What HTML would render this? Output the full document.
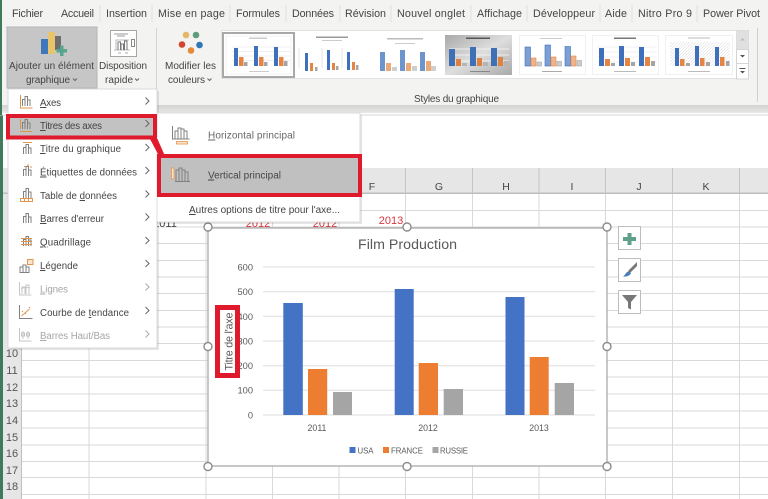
<!DOCTYPE html>
<html lang="fr">
<head>
<meta charset="utf-8">
<title>Film Production</title>
<style>
html,body{margin:0;padding:0;background:#fff;width:768px;height:499px;overflow:hidden}
svg{display:block;font-family:"Liberation Sans",sans-serif;filter:blur(.35px)}
.t{font-size:10.7px;fill:#444}
.r{font-size:10px;fill:#444}
.m{font-size:9.7px;fill:#444}
.d{font-size:9.7px;fill:#a6a6a6}
.s{font-size:10px;fill:#444}
.u{text-decoration:underline}
.ax{font-size:9.3px;fill:#595959}
.yr{font-size:8.8px;fill:#595959}
.h{font-size:10.5px;fill:#444;text-anchor:middle}
.g{stroke:#d9d9d9;stroke-width:1}
.c{fill:#fff;stroke:#8c8c8c;stroke-width:1.4}
.chev{fill:none;stroke:#666;stroke-width:1}
.chevd{fill:none;stroke:#aaa;stroke-width:1}
.ib{fill:none;stroke:#808080;stroke-width:1}
.io{fill:none;stroke:#e0954a;stroke-width:1}
</style>
</head>
<body>
<svg width="768" height="499" viewBox="0 0 768 499" xmlns="http://www.w3.org/2000/svg">
<defs>
<linearGradient id="gt" x1="0" y1="0" x2="1" y2="1"><stop offset="0" stop-color="#a9a9a9"/><stop offset=".5" stop-color="#dedede"/><stop offset="1" stop-color="#a9a9a9"/></linearGradient>
<linearGradient id="sh" x1="0" y1="0" x2="0" y2="1"><stop offset="0" stop-color="#d2d2d0"/><stop offset="1" stop-color="#e8e8e6"/></linearGradient>
<pattern id="ht" width="3" height="3" patternUnits="userSpaceOnUse"><path d="M0 3L3 0" stroke="#ddd" stroke-width=".6"/></pattern>
<g id="mi"><path class="ib" d="M3.5 11V4.500h2.500V11M6 11V1.500h2.500V11M8.500 11V5h2.500v6"/></g>
</defs>

<!-- sheet -->
<rect width="768" height="499" fill="#fff"/>
<rect x="0" y="168" width="768" height="26" fill="#e6e6e6"/>
<rect x="0" y="192.500" width="768" height="1.500" fill="#bdbdbd"/>
<rect x="3" y="194" width="19" height="305" fill="#e6e6e6"/>
<rect x="21" y="194" width="1" height="305" fill="#c0c0c0"/>
<g class="g">
<path d="M22 210.500H768M22 227H768M22 243.500H768M22 260.500H768M22 277H768M22 293.500H768M22 310.500H768M22 327H768M22 343.500H768M22 360.500H768M22 377H768M22 394H768M22 411H768M22 428H768M22 445H768M22 461.500H768M22 477.500H768M22 494.500H768"/>
<path d="M89 194V499M206 194V499M272.500 194V499M339 194V499M405.500 194V499M472.500 194V499M539 194V499M605.500 194V499M672.500 194V499M739.500 194V499"/>
</g>
<path d="M339 168V193M405.500 168V193M472.500 168V193M539 168V193M605.500 168V193M672.500 168V193M739.500 168V193" stroke="#c4c4c4"/>
<text x="372" y="190" class="h">F</text><text x="439" y="190" class="h">G</text><text x="506" y="190" class="h">H</text><text x="572" y="190" class="h">I</text><text x="639" y="190" class="h">J</text><text x="706" y="190" class="h">K</text>
<g font-size="11" fill="#555" text-anchor="middle">
<text x="12" y="357">10</text><text x="12" y="374">11</text><text x="12" y="391">12</text><text x="12" y="407">13</text><text x="12" y="424">14</text><text x="12" y="441">15</text><text x="12" y="457">16</text><text x="12" y="474">17</text><text x="12" y="490">18</text>
</g>
<rect x="0" y="115" width="3" height="384" fill="#3f7a5a"/>
<g font-size="11" fill="#d8343f" text-anchor="middle"><text x="391" y="224">2013</text><text x="258" y="227">2012</text><text x="325" y="227">2012</text></g>
<text x="165" y="227" font-size="11" fill="#444" text-anchor="middle">2011</text>

<!-- ribbon -->
<rect width="768" height="105" fill="#f3f3f2"/>
<rect y="105" width="768" height="8" fill="url(#sh)"/>
<rect y="113" width="768" height="1" fill="#fff"/>
<rect y="114.500" width="768" height="1" fill="#d6d6d6"/>
<rect width="2" height="115" fill="#3f7a5a"/>
<g class="t">
<text x="12" y="17" textLength="31">Fichier</text><text x="61" y="17" textLength="33">Accueil</text><text x="106" y="17" textLength="41">Insertion</text><text x="158" y="17" textLength="67">Mise en page</text><text x="236" y="17" textLength="44">Formules</text><text x="292" y="17" textLength="42">Données</text><text x="345" y="17" textLength="41">Révision</text><text x="397" y="17" textLength="68">Nouvel onglet</text><text x="477" y="17" textLength="45">Affichage</text><text x="533" y="17" textLength="62">Développeur</text><text x="605" y="17" textLength="22">Aide</text><text x="638" y="17" textLength="54">Nitro Pro 9</text><text x="703" y="17" textLength="57">Power Pivot</text>
</g>
<path d="M100 5V22M152 5V22M230 5V22M286 5V22M340 5V22M391 5V22M471 5V22M527 5V22M600 5V22M632 5V22M697 5V22" stroke="#e0e0e0"/>

<!-- Ajouter -->
<rect x="7" y="27" width="90" height="61" fill="#c6c6c6" stroke="#b5b5b5"/>
<rect x="41" y="39" width="7" height="15" fill="#3f77bd"/>
<rect x="48" y="32" width="7" height="22" fill="#e8c46c"/>
<rect x="55" y="36" width="6" height="14" fill="#6e6e6e"/>
<path d="M60 45.500h3.500V49H67v3.500h-3.500V56H60v-3.500h-3.500V49H60z" fill="#55a68c"/>
<g class="r">
<text x="9" y="69" textLength="85">Ajouter un élément</text><text x="26" y="83" textLength="44">graphique</text>
<text x="99" y="69" textLength="48">Disposition</text><text x="105" y="83" textLength="28">rapide</text>
<text x="165" y="69" textLength="51">Modifier les</text><text x="168" y="83" textLength="37">couleurs</text>
</g>
<path class="chev" d="M73 78.500l2 2 2-2M135 78.500l2 2 2-2M207.500 78.500l2 2 2-2"/>
<!-- Disposition -->
<rect x="110.500" y="30.500" width="26" height="26" fill="#fff" stroke="#a6a6a6"/>
<path d="M114 34h14M117 36h8" stroke="#999"/>
<path d="M116 50V40h13M114 50h16" fill="none" stroke="#bbb"/>
<path d="M118 50v-8h2.500v8M121 50v-6h2.500v6M124.500 50v-9h2.500v9" fill="none" stroke="#777"/>
<rect x="131.500" y="39.500" width="3" height="7" fill="none" stroke="#888"/>
<path d="M118 53h3M125 53h3" stroke="#aaa"/>
<path d="M156.500 28V90" stroke="#d4d4d4"/>
<!-- colours -->
<circle cx="186" cy="35" r="3.300" fill="#e6b765"/><circle cx="196" cy="35" r="3.300" fill="#5f9c7c"/>
<circle cx="182" cy="44.500" r="3.300" fill="#d2452f"/><circle cx="199.500" cy="45" r="3.300" fill="#2f78b5"/>
<circle cx="191" cy="50.500" r="3.300" fill="#e58a35"/>

<!-- gallery -->
<rect x="221.500" y="30.500" width="526" height="48" fill="#fff" stroke="#e2e2e2"/>
<rect x="223" y="33" width="71" height="44" fill="#fff" stroke="#a8a8a8" stroke-width="2"/>
<!-- T1 -->
<g>
<rect x="226" y="36" width="65" height="38" fill="#fff" stroke="#f0f0f0"/>
<path d="M232 47h58M232 51.500h58M232 56h58M232 60.500h58" stroke="#efefef"/>
<rect x="249" y="37.500" width="18" height="1.500" fill="#ccc"/>
<rect x="234" y="48" width="4" height="18" fill="#3e70bb"/><rect x="239" y="57" width="4.500" height="9" fill="#e58544"/><rect x="244" y="62" width="3.500" height="4" fill="#a5a5a5"/>
<rect x="254" y="46" width="4" height="20" fill="#3e70bb"/><rect x="259" y="57" width="4.500" height="9" fill="#e58544"/><rect x="264" y="62" width="3.500" height="4" fill="#a5a5a5"/>
<rect x="274" y="47" width="4" height="19" fill="#3e70bb"/><rect x="279" y="57" width="4.500" height="9" fill="#e58544"/><rect x="284" y="61" width="3.500" height="5" fill="#a5a5a5"/>
<rect x="249" y="71" width="20" height="1" fill="#ccc"/>
</g>
<!-- T2 -->
<g>
<rect x="316" y="36.500" width="32" height="1.500" fill="#999"/><rect x="322" y="40" width="20" height="1" fill="#ccc"/>
<path d="M299 48V68M322 48V68M342 48V68" stroke="#e4e4e4"/>
<rect x="305" y="53" width="3" height="18" fill="#3e70bb"/><rect x="310" y="63" width="3" height="8" fill="#e58544"/><rect x="315" y="67" width="2.500" height="4" fill="#a5a5a5"/>
<rect x="327" y="50" width="3" height="20" fill="#3e70bb"/><rect x="332" y="63" width="3" height="7" fill="#e58544"/><rect x="336" y="66" width="2.500" height="4" fill="#a5a5a5"/>
<rect x="347" y="52" width="3" height="18" fill="#3e70bb"/><rect x="352" y="62" width="3" height="8" fill="#e58544"/><rect x="356" y="65" width="2.500" height="5" fill="#a5a5a5"/>
</g>
<!-- T3 -->
<g>
<rect x="387" y="38" width="36" height="1.500" fill="#bbb"/><rect x="395" y="43" width="20" height="1" fill="#ccc"/>
<rect x="380" y="52" width="5" height="19" fill="#6d95cc"/><rect x="386" y="63" width="5" height="8" fill="#eda877"/><rect x="392" y="67" width="5" height="4" fill="#cfcfcf"/>
<rect x="400" y="50" width="5" height="21" fill="#6d95cc"/><rect x="406" y="63" width="5" height="8" fill="#eda877"/><rect x="412" y="66" width="5" height="5" fill="#cfcfcf"/>
<rect x="420" y="52" width="5" height="19" fill="#6d95cc"/><rect x="426" y="61" width="5" height="10" fill="#eda877"/><rect x="431" y="66" width="5" height="5" fill="#cfcfcf"/>
</g>
<!-- T4 -->
<rect x="445" y="35" width="67" height="40" fill="url(#gt)"/>
<rect x="466" y="37.500" width="24" height="1.500" fill="#555"/>
<path d="M449 49h60M449 55h60M449 61h60" stroke="#efefef"/>
<g fill="#3f6fb5"><rect x="449" y="49" width="6" height="17"/><rect x="470" y="47" width="6" height="19"/><rect x="491" y="48" width="6" height="18"/></g>
<g fill="#e0823f"><rect x="456" y="59" width="5" height="7"/><rect x="477" y="58" width="5" height="8"/><rect x="498" y="57" width="5" height="9"/></g>
<g fill="#b5b5b5"><rect x="462" y="63" width="5" height="3"/><rect x="483" y="62" width="5" height="4"/><rect x="504" y="61" width="5" height="5"/></g>
<rect x="470" y="71" width="20" height="1" fill="#888"/>
<!-- T5 -->
<rect x="519.500" y="35.500" width="66" height="39" fill="#fff" stroke="#f0f0f0"/>
<rect x="540" y="38" width="22" height="1" fill="#ccc"/>
<g fill="#7c9fd4" stroke="#3e70bb" stroke-width=".6"><rect x="525" y="47" width="5.500" height="19"/><rect x="545" y="45" width="5.500" height="21"/><rect x="565" y="46.500" width="5.500" height="19.500"/></g>
<g fill="#f0b48c" stroke="#e58544" stroke-width=".6"><rect x="531" y="58" width="5" height="8"/><rect x="551" y="57" width="5" height="9"/><rect x="571" y="56" width="5" height="10"/></g>
<g fill="#cdcdcd" stroke="#a5a5a5" stroke-width=".6"><rect x="537" y="62" width="4.500" height="4"/><rect x="557" y="61.500" width="4.500" height="4.500"/><rect x="577" y="60.500" width="4.500" height="5.500"/></g>
<rect x="542" y="71" width="20" height="1" fill="#aaa"/>
<!-- T6 -->
<rect x="592.500" y="35.500" width="66" height="39" fill="#fff" stroke="#f0f0f0"/>
<rect x="614" y="37.500" width="22" height="1.500" fill="#777"/>
<path d="M597 47h60M597 52h60M597 57h60M597 62h60" stroke="#f0f0f0"/>
<g fill="#3e70bb"><rect x="599" y="48" width="5" height="18"/><rect x="619" y="46" width="5" height="20"/><rect x="639" y="47" width="5" height="19"/></g>
<g fill="#e58544"><rect x="605" y="59" width="5" height="7"/><rect x="625" y="58" width="5" height="8"/><rect x="645" y="57" width="5" height="9"/></g>
<g fill="#a5a5a5"><rect x="611" y="63" width="4" height="3"/><rect x="631" y="62" width="4" height="4"/><rect x="651" y="61" width="4" height="5"/></g>
<rect x="614" y="71" width="22" height="1" fill="#bbb"/>
<!-- T7 -->
<rect x="665.500" y="35.500" width="67" height="39" fill="#fff" stroke="#f0f0f0"/>
<rect x="670" y="42" width="60" height="24" fill="url(#ht)"/>
<rect x="688" y="37.500" width="22" height="1" fill="#bbb"/>
<g fill="#3e70bb"><rect x="675" y="48" width="4" height="18"/><rect x="695" y="46" width="4" height="20"/><rect x="715" y="47" width="4" height="19"/></g>
<g fill="#e58544"><rect x="680" y="59" width="4.500" height="7"/><rect x="700" y="58" width="4.500" height="8"/><rect x="720" y="57" width="4.500" height="9"/></g>
<g fill="#a5a5a5"><rect x="686" y="63" width="4" height="3"/><rect x="706" y="62" width="4" height="4"/><rect x="726" y="61" width="3.500" height="5"/></g>
<rect x="688" y="71" width="22" height="1" fill="#bbb"/>
<!-- scroll -->
<rect x="736.500" y="30.500" width="12" height="19" fill="#e0e0e0" stroke="#dcdcdc"/>
<rect x="736.500" y="49.500" width="12" height="14" fill="#fff" stroke="#d4d4d4"/>
<rect x="736.500" y="63.500" width="12" height="15.500" fill="#fff" stroke="#d4d4d4"/>
<path d="M740 40.500h5l-2.500-2.500z" fill="#bbb"/>
<path d="M740 55h5l-2.500 2.500z" fill="#555"/>
<path d="M739.500 68.500h6" stroke="#555"/><path d="M740 71h5l-2.500 2.500z" fill="#555"/>
<text x="414" y="102" class="r" textLength="85">Styles du graphique</text>
<path d="M757.500 28V102" stroke="#cfcfcf"/>

<!-- chart -->
<rect x="208" y="228" width="399" height="238" fill="#fff" stroke="#a3a3a3" stroke-width="1.200"/>
<text x="358" y="249" font-size="14.200" fill="#595959" textLength="99">Film Production</text>
<path d="M263 267H595M263 291.700H595M263 316.300H595M263 341H595M263 365.700H595M263 390.300H595M263 415H595" stroke="#dedede"/>
<g class="ax" text-anchor="end"><text x="253" y="270.500">600</text><text x="253" y="295">500</text><text x="253" y="320">400</text><text x="253" y="344.500">300</text><text x="253" y="369">200</text><text x="253" y="393.500">100</text><text x="253" y="418.500">0</text></g>
<g fill="#4472c4"><rect x="283.300" y="303" width="19.500" height="112"/><rect x="394.700" y="289" width="19" height="126"/><rect x="505.500" y="297" width="19" height="118"/></g>
<g fill="#ed7d31"><rect x="308" y="369" width="19.200" height="46"/><rect x="418.700" y="363" width="19.300" height="52"/><rect x="529.700" y="357" width="19" height="58"/></g>
<g fill="#a5a5a5"><rect x="333" y="392" width="19" height="23"/><rect x="443.700" y="389" width="19.300" height="26"/><rect x="554.700" y="383" width="19.300" height="32"/></g>
<g class="yr" text-anchor="middle"><text x="317" y="431">2011</text><text x="428" y="431">2012</text><text x="539" y="431">2013</text></g>
<rect x="349.500" y="447" width="6" height="6" fill="#4472c4"/><rect x="383" y="447" width="6" height="6" fill="#ed7d31"/><rect x="432.500" y="447" width="6" height="6" fill="#a5a5a5"/>
<g font-size="7.800" fill="#595959"><text x="357.500" y="453.500" textLength="16">USA</text><text x="391" y="453.500" textLength="32">FRANCE</text><text x="440" y="453.500" textLength="28">RUSSIE</text></g>
<!-- axis title -->
<rect x="217.500" y="307.500" width="20" height="68" fill="#fff" stroke="#de1a2c" stroke-width="5"/>
<text transform="translate(232.500,370.500) rotate(-90)" font-size="10.800" fill="#595959" textLength="58">Titre de l'axe</text>
<!-- handles -->
<g class="c"><circle cx="208" cy="227" r="4"/><circle cx="407" cy="227" r="4"/><circle cx="607" cy="227" r="4"/><circle cx="208" cy="346.500" r="4"/><circle cx="607" cy="346.500" r="4"/><circle cx="208" cy="466.500" r="4"/><circle cx="407" cy="466.500" r="4"/><circle cx="607" cy="466.500" r="4"/></g>
<!-- float buttons -->
<g fill="#fff" stroke="#bdbdbd"><rect x="618.500" y="226.500" width="22" height="23"/><rect x="618.500" y="258.500" width="22" height="23"/><rect x="618.500" y="290.500" width="22" height="23"/></g>
<path d="M627.500 233h4v4h4.500v4h-4.500v4h-4v-4H623v-4h4.500z" fill="#5fa08a"/>
<path d="M637 262l-9 9 2 2 7-7z" fill="#777"/>
<path d="M623 276.500c2-.5 2.500-5 6-5l2 1.500c-1 2.500-4 4-8 3.500z" fill="#4a7fb5"/>
<path d="M622 295h15l-6 7v7.500l-3-1.500v-6z" fill="#777"/>

<!-- main menu -->
<rect x="10" y="91" width="149" height="259" fill="#000" opacity=".1"/>
<rect x="8" y="89" width="149" height="259" fill="#fff" stroke="#d8d8d8"/>
<!-- submenu -->
<rect x="159" y="115" width="203" height="109" fill="#000" opacity=".1"/>
<rect x="157" y="113" width="203" height="109" fill="#fff" stroke="#dcdcdc"/>
<!-- highlights -->
<rect x="8" y="116" width="147" height="21.500" fill="#c2c2c2" stroke="#de1a2c" stroke-width="4"/>
<path d="M150 139h7.500l7 16h-6z" fill="#de1a2c"/>
<rect x="159" y="156" width="201" height="39" fill="#c0c0c0" stroke="#de1a2c" stroke-width="4"/>
<!-- menu icons -->
<g transform="translate(19,95)"><use href="#mi"/><path class="io" d="M1.500 0v13h12"/></g>
<g transform="translate(19,118)"><use href="#mi"/><path class="io" d="M1.500 1v10M1 13.500h12"/></g>
<g transform="translate(20,142)"><use href="#mi" y="1"/><path class="io" d="M3 .5h9"/></g>
<g transform="translate(20,165)"><use href="#mi"/><path d="M4 1.500h2M7 0h2M10 2h2" stroke="#e0954a"/></g>
<g transform="translate(20,188)"><use href="#mi" y="-1"/><path class="io" d="M.5 10.500h12v3H.5zM4.500 10.500v3M8.500 10.500v3"/></g>
<g transform="translate(20,212)"><use href="#mi"/></g>
<g transform="translate(20,235)"><use href="#mi"/><path class="io" d="M1 3.500h11M1 6.500h11M1 9.500h11"/></g>
<g transform="translate(19,259)"><path class="ib" d="M1 13V8h3v5M4 13V6h3v7M7 13V8h3v5M.5 13.500h10"/><rect x="8.500" y=".5" width="5.500" height="5" fill="#fbe5d0" stroke="#e0954a"/></g>
<g transform="translate(19,282)" opacity=".45"><path class="ib" d="M.5 0v13h12M3 12V5h3v7M7 12V3h3v9M2 7l4-2 5 1"/></g>
<g transform="translate(19,305)"><path class="ib" d="M.5 0v13.500h13"/><path d="M2.500 11l8-7M3 6l1 1M6 8l1 1M10 2l1 1" fill="none" stroke="#e0954a"/></g>
<g transform="translate(19,328)" opacity=".45"><path class="ib" d="M.5 0v13h12M4 3v8M9 3v8"/><rect x="2.500" y="5" width="3" height="3" fill="none" stroke="#777"/><rect x="7.500" y="5" width="3" height="3" fill="none" stroke="#777"/></g>
<!-- sub icons -->
<g transform="translate(172,126)"><path class="ib" d="M.5 0v13h17M3 13V5h3v8M6 13V2h3v11M9 13V3h3v10M12 13V5h3v8"/><rect x="4.500" y="15.500" width="11" height="2.500" fill="#fbe5d0" stroke="#e0954a" stroke-width=".8"/></g>
<g transform="translate(171,167)"><rect x=".5" y="1" width="2.500" height="11" fill="#fbe5d0" stroke="#e0954a" stroke-width=".8"/><path class="ib" d="M5 14V3h3v11M8 14V1h3v13M11 14V3h3v11M14 14V5h3v9M4 14.500h15"/></g>
<!-- menu text -->
<g class="m">
<text x="40" y="106" textLength="21"><tspan class="u">A</tspan>xes</text>
<text x="40" y="129" textLength="62"><tspan class="u">T</tspan>itres des axes</text>
<text x="40" y="152" textLength="81"><tspan class="u">T</tspan>itre du graphique</text>
<text x="40" y="175.500" textLength="97"><tspan class="u">É</tspan>tiquettes de données</text>
<text x="40" y="199" textLength="77">Table de <tspan class="u">d</tspan>onnées</text>
<text x="40" y="222" textLength="64"><tspan class="u">B</tspan>arres d'erreur</text>
<text x="40" y="245.500" textLength="51"><tspan class="u">Q</tspan>uadrillage</text>
<text x="40" y="269" textLength="38"><tspan class="u">L</tspan>égende</text>
<text x="40" y="316" textLength="89">Courbe de <tspan class="u">t</tspan>endance</text>
</g>
<g class="s">
<text x="208" y="138.500" textLength="87" style="fill:#666"><tspan class="u">H</tspan>orizontal principal</text>
<text x="208" y="178.500" textLength="73"><tspan class="u">V</tspan>ertical principal</text>
<text x="189" y="213" textLength="151"><tspan class="u">A</tspan>utres options de titre pour l'axe...</text>
</g>
<g class="d">
<text x="40" y="292.500" textLength="28"><tspan class="u">L</tspan>ignes</text>
<text x="40" y="339" textLength="70"><tspan class="u">B</tspan>arres Haut/Bas</text>
</g>
<path class="chev" d="M145.500 97.500l3.500 3.500-3.500 3.500M145.500 120l3.500 3.500-3.500 3.500M145.500 144l3.500 3.500-3.500 3.500M145.500 167l3.500 3.500-3.500 3.500M145.500 190.500l3.500 3.500-3.500 3.500M145.500 213.500l3.500 3.500-3.500 3.500M145.500 237l3.500 3.500-3.500 3.500M145.500 260l3.500 3.500-3.500 3.500M145.500 307l3.500 3.500-3.500 3.500"/>
<path class="chevd" d="M145.500 283.500l3.500 3.500-3.500 3.500M145.500 330.500l3.500 3.500-3.500 3.500"/>
</svg>
</body>
</html>
